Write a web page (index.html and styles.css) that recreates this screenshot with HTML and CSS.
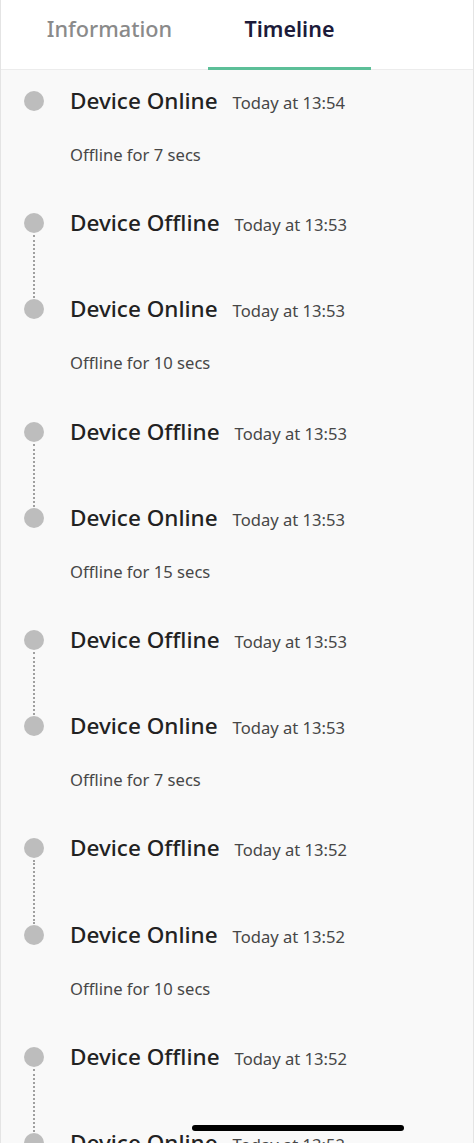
FILE: index.html
```html
<!DOCTYPE html>
<html lang="en">

<head>
    <meta charset="UTF-8">
    <meta name="viewport" content="width=device-width, initial-scale=1.0">
    <title>Timeline</title>
    <link rel="stylesheet" href="styles.css">
</head>

<body>
    <div class="tabs">
        <div class="tab">Information</div>
        <div class="tab active">Timeline</div>
    </div>

    <div class="timeline">
        <div class="event online">
            <div class="marker"><span class="dot"></span></div>
            <div class="content">
                <div class="row"><span class="title">Device Online</span><span class="time">Today at 13:54</span></div>
                <div class="note">Offline for 7 secs</div>
            </div>
        </div>
        <div class="event offline">
            <div class="marker"><span class="dot"></span></div>
            <div class="content">
                <div class="row"><span class="title">Device Offline</span><span class="time">Today at 13:53</span></div>
            </div>
        </div>
        <div class="event online">
            <div class="marker"><span class="dot"></span></div>
            <div class="content">
                <div class="row"><span class="title">Device Online</span><span class="time">Today at 13:53</span></div>
                <div class="note">Offline for 10 secs</div>
            </div>
        </div>
        <div class="event offline">
            <div class="marker"><span class="dot"></span></div>
            <div class="content">
                <div class="row"><span class="title">Device Offline</span><span class="time">Today at 13:53</span></div>
            </div>
        </div>
        <div class="event online">
            <div class="marker"><span class="dot"></span></div>
            <div class="content">
                <div class="row"><span class="title">Device Online</span><span class="time">Today at 13:53</span></div>
                <div class="note">Offline for 15 secs</div>
            </div>
        </div>
        <div class="event offline">
            <div class="marker"><span class="dot"></span></div>
            <div class="content">
                <div class="row"><span class="title">Device Offline</span><span class="time">Today at 13:53</span></div>
            </div>
        </div>
        <div class="event online">
            <div class="marker"><span class="dot"></span></div>
            <div class="content">
                <div class="row"><span class="title">Device Online</span><span class="time">Today at 13:53</span></div>
                <div class="note">Offline for 7 secs</div>
            </div>
        </div>
        <div class="event offline">
            <div class="marker"><span class="dot"></span></div>
            <div class="content">
                <div class="row"><span class="title">Device Offline</span><span class="time">Today at 13:52</span></div>
            </div>
        </div>
        <div class="event online">
            <div class="marker"><span class="dot"></span></div>
            <div class="content">
                <div class="row"><span class="title">Device Online</span><span class="time">Today at 13:52</span></div>
                <div class="note">Offline for 10 secs</div>
            </div>
        </div>
        <div class="event offline">
            <div class="marker"><span class="dot"></span></div>
            <div class="content">
                <div class="row"><span class="title">Device Offline</span><span class="time">Today at 13:52</span></div>
            </div>
        </div>
        <div class="event online">
            <div class="marker"><span class="dot"></span></div>
            <div class="content">
                <div class="row"><span class="title">Device Online</span><span class="time">Today at 13:52</span></div>
                <div class="note">Offline for 7 secs</div>
            </div>
        </div>
    </div>

    <!-- barra do iPhone -->
    <div class="home-bar"></div>
</body>

</html>
```

FILE: styles.css
```css
html,
body {
    margin: 0;
    height: 100%;
    overflow: hidden;
}

body {
    font-family: "Noto Sans", "Open Sans", sans-serif;
    background-color: #f9f9f9;
    border-left: 1px solid #e4e4e4;
    border-right: 1px solid #e4e4e4;
    box-sizing: border-box;
    position: relative;
}

.tabs {
    display: flex;
    gap: 17px;
    padding-left: 27px;
    height: 69px;
    background-color: #ffffff;
    border-bottom: 1px solid #ececec;
}

.tab {
    width: 163px;
    text-align: center;
    font-size: 21.7px;
    font-weight: 500;
    line-height: 24px;
    padding-top: 17px;
    color: #8a8a8a;
    position: relative;
}

.tab.active {
    color: #1d1b3a;
    font-weight: 600;
    font-size: 21.5px;
}

.tab.active::after {
    content: "";
    position: absolute;
    left: 0;
    right: 0;
    bottom: -1px;
    height: 3px;
    background-color: #5cbf98;
}

.timeline {
    padding-top: 21px;
}

.event {
    display: flex;
}

.event.online .content {
    padding-bottom: 48.2px;
}

.event.offline .content {
    padding-bottom: 66.2px;
}

.marker {
    width: 69px;
    flex-shrink: 0;
    position: relative;
}

.dot {
    display: block;
    width: 20px;
    height: 20px;
    border-radius: 50%;
    background-color: #bdbdbd;
    margin-left: 23px;
}

.event.offline .marker::after {
    content: "";
    position: absolute;
    left: 32px;
    top: 22px;
    bottom: 1px;
    border-left: 2px dotted #a0a0a0;
}

.row {
    display: flex;
    align-items: baseline;
    gap: 15px;
    height: 20px;
    line-height: 20px;
    white-space: nowrap;
}

.title {
    font-size: 22.5px;
    font-weight: 500;
    color: #222222;
}

.time {
    font-size: 16.6px;
    color: #474747;
}

.note {
    margin-top: 34px;
    font-size: 16.6px;
    line-height: 20px;
    color: #474747;
}

.home-bar {
    position: absolute;
    left: 191px;
    bottom: 12px;
    width: 212px;
    height: 6px;
    border-radius: 3px;
    background-color: #000000;
}
```
